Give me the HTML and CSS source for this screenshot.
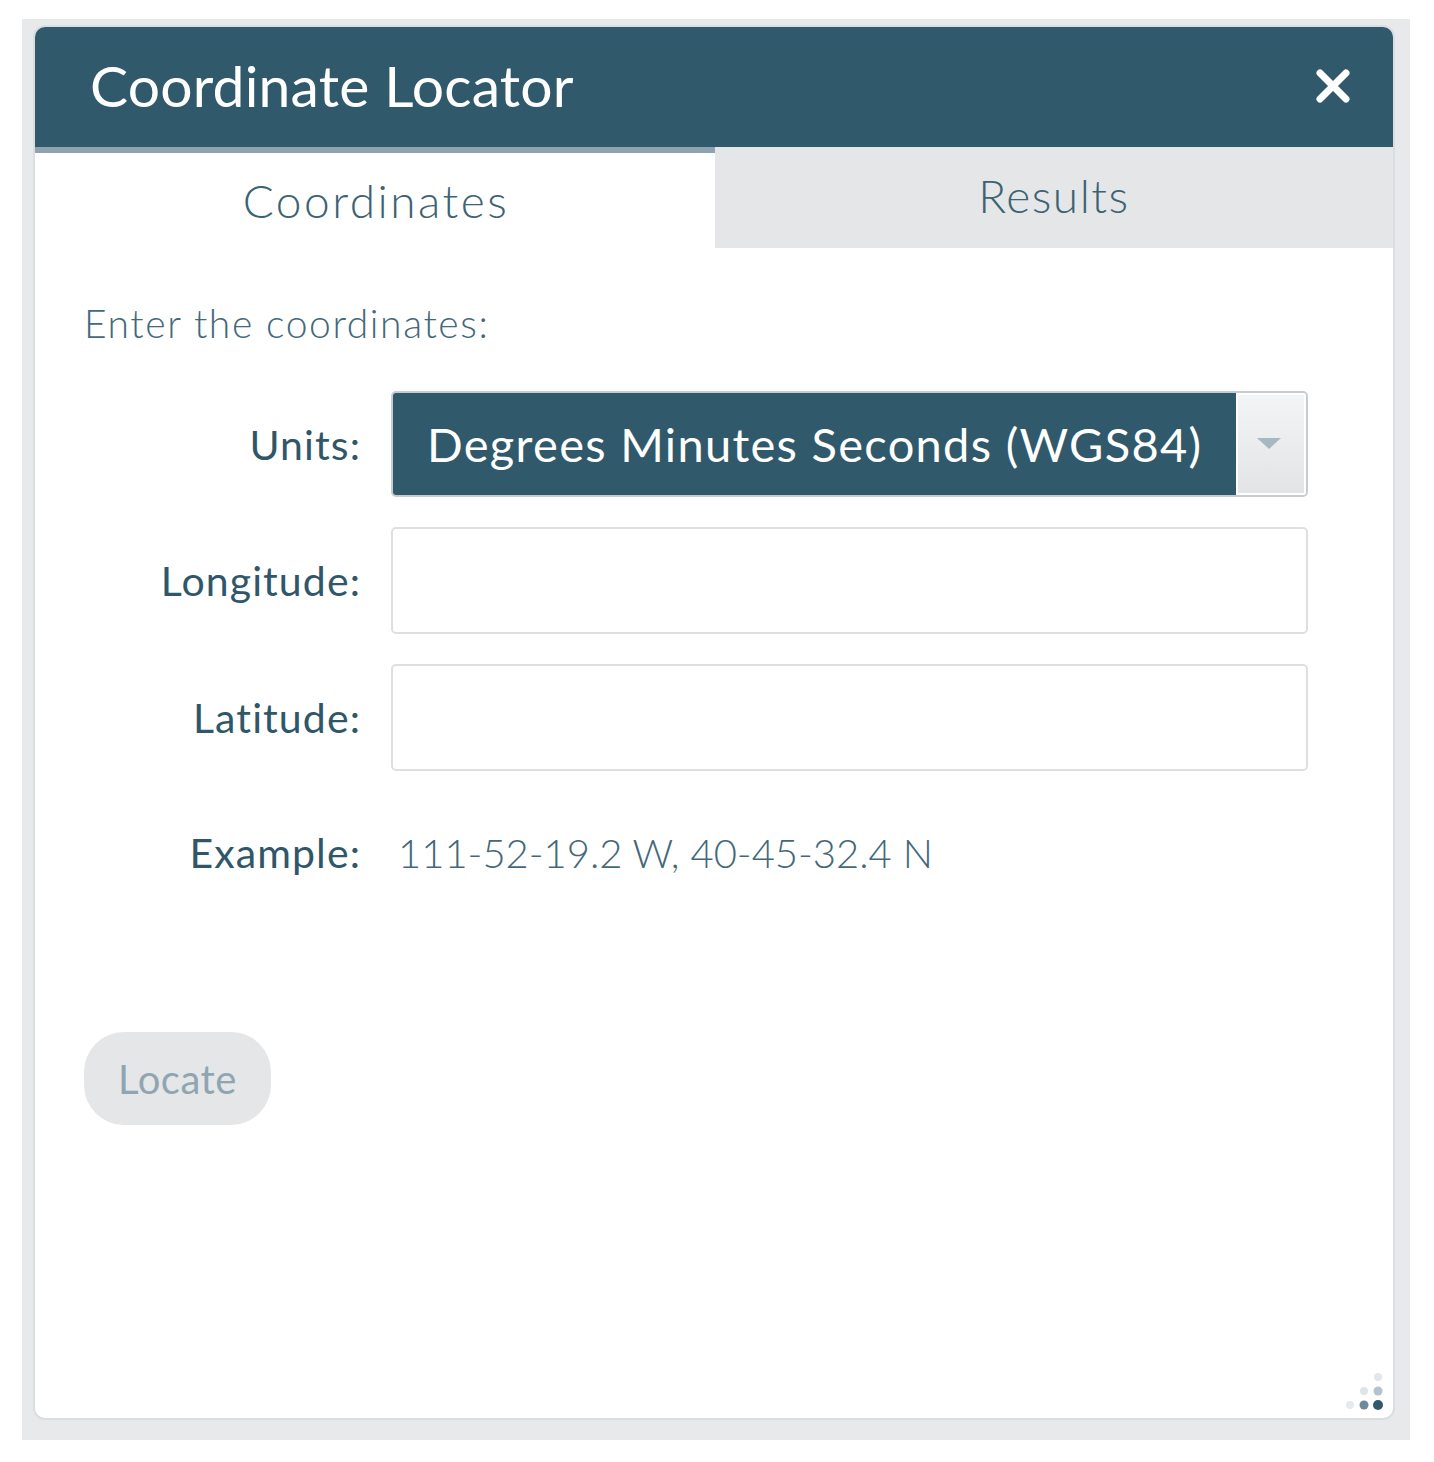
FILE: index.html
```html
<!DOCTYPE html>
<html lang="en">
<head>
<meta charset="utf-8">
<title>Coordinate Locator</title>
<link rel="stylesheet" href="styles.css">
</head>
<body>
<div class="map">
  <div class="panel">
    <div class="header">
      <h1 class="title">Coordinate Locator</h1>
      <svg class="close" width="36" height="36" viewBox="0 0 36 36" aria-label="Close">
        <path d="M5 5 L31 31 M31 5 L5 31" stroke="#ffffff" stroke-width="7" stroke-linecap="round"/>
      </svg>
    </div>
    <div class="tabs">
      <div class="tab active">Coordinates</div>
      <div class="tab">Results</div>
    </div>
    <div class="content">
      <p class="intro">Enter the coordinates:</p>
      <div class="form">
        <label class="label">Units:</label>
        <div class="select">
          <span class="select-value">Degrees Minutes Seconds (WGS84)</span>
          <span class="select-arrow">
            <svg width="24" height="12" viewBox="0 0 24 12"><path d="M0 0 H24 L12 11 Z" fill="#a8b8c2"/></svg>
          </span>
        </div>
        <label class="label">Longitude:</label>
        <div class="input"></div>
        <label class="label">Latitude:</label>
        <div class="input"></div>
        <span class="label example-label">Example:</span>
        <span class="example">111-52-19.2 W, 40-45-32.4 N</span>
      </div>
      <button class="locate">Locate</button>
    </div>
    <svg class="resize" width="40" height="40" viewBox="0 0 40 40">
      <circle cx="33" cy="6" r="4" fill="#e3e7ea"/>
      <circle cx="19" cy="20" r="4" fill="#dfe4e8"/>
      <circle cx="33" cy="20" r="4.5" fill="#b3c2cc"/>
      <circle cx="5" cy="34" r="4" fill="#e6eaed"/>
      <circle cx="19" cy="34" r="4.5" fill="#6f8a9a"/>
      <circle cx="33" cy="34" r="5" fill="#30596b"/>
    </svg>
  </div>
</div>
</body>
</html>
```
FILE: styles.css
```css
* { box-sizing: border-box; }
html, body { margin: 0; padding: 0; background: #ffffff; }
body { font-family: "Lato", "Liberation Sans", sans-serif; }

.map {
  margin: 19px 0 0 22px;
  width: 1388px;
  height: 1421px;
  background: #e8e9ea;
  padding: 6px 15px 20px 11px;
}

.panel {
  position: relative;
  height: 100%;
  background: #ffffff;
  border: 2px solid #dadee1;
  border-radius: 12px;
  overflow: hidden;
  display: flex;
  flex-direction: column;
}

.header {
  height: 120px;
  background: #30596b;
  display: flex;
  align-items: center;
  justify-content: space-between;
  padding: 0 42px 4px 55px;
  flex: none;
}
.title {
  margin: 0;
  color: #ffffff;
  font-weight: 400;
  font-size: 57px;
  letter-spacing: 0.2px;
}
.close { display: block; margin-top: 2px; }

.tabs {
  display: flex;
  height: 101px;
  flex: none;
}
.tab {
  flex: 1;
  display: flex;
  align-items: center;
  justify-content: center;
  font-size: 46px;
  font-weight: 300;
  color: #3b6374;
  background: #e5e6e8;
  padding-bottom: 4px;
  letter-spacing: 1.5px;
}
.tab.active {
  background: #ffffff;
  border-top: 6px solid #8ea3af;
  padding-bottom: 0;
  padding-left: 2px;
  letter-spacing: 2.5px;
}

.content {
  padding: 52px 0 0 49px;
  flex: 1;
}
.intro {
  margin: 0 0 45px 0;
  font-size: 39px;
  font-weight: 300;
  color: #43687a;
  letter-spacing: 1.6px;
}

.form {
  display: grid;
  grid-template-columns: 277px 917px;
  column-gap: 30px;
  row-gap: 30px;
  align-items: center;
}
.label {
  justify-self: end;
  font-size: 41px;
  font-weight: 400;
  color: #2f5769;
  letter-spacing: 1.1px;
}

.select {
  height: 106px;
  border: 2px solid #c6cdd2;
  border-radius: 5px;
  display: flex;
  overflow: hidden;
}
.select-value {
  flex: 1;
  background: #30596b;
  color: #ffffff;
  font-size: 47px;
  font-weight: 400;
  letter-spacing: 1.3px;
  display: flex;
  align-items: center;
  padding-left: 34px;
}
.select-arrow {
  width: 70px;
  background: linear-gradient(#f3f4f5, #e2e4e6);
  border: 2px solid #ffffff;
  display: flex;
  align-items: center;
  justify-content: center;
  padding-right: 4px;
}

.input {
  height: 107px;
  border: 2px solid #dde0e3;
  border-radius: 5px;
  background: #ffffff;
}

.example-label {
  margin-top: 27px;
}
.example {
  margin-top: 27px;
  padding-left: 7px;
  font-size: 40px;
  font-weight: 300;
  color: #43687a;
}

.locate {
  margin-top: 155px;
  width: 187px;
  height: 93px;
  border: none;
  border-radius: 40px;
  background: #e5e6e8;
  color: #8fa5b1;
  font-family: "Lato", "Liberation Sans", sans-serif;
  font-size: 40px;
  font-weight: 400;
  letter-spacing: 0.5px;
  padding: 0;
}

.resize {
  position: absolute;
  right: 8px;
  bottom: 7px;
}
```
